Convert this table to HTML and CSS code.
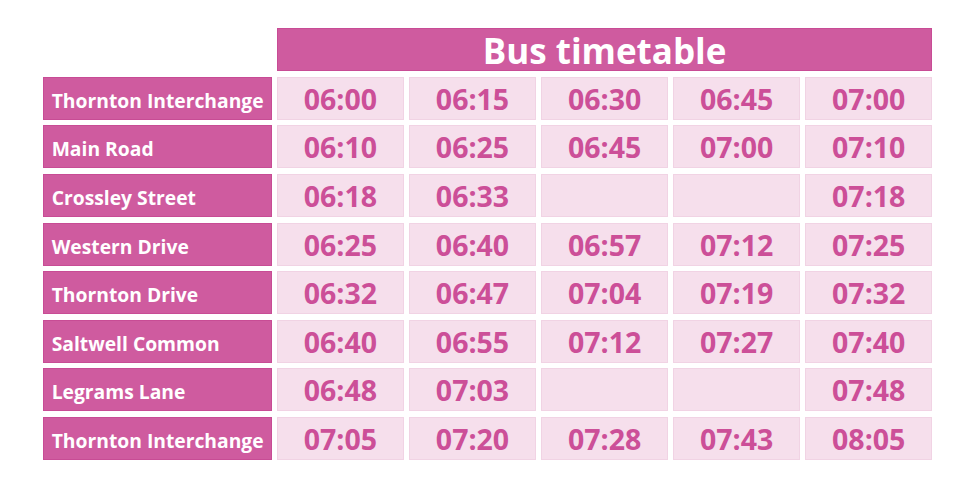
FILE: index.html
```html
<!DOCTYPE html>
<html lang="en">
<head>
<meta charset="utf-8">
<title>Bus timetable</title>
<link rel="stylesheet" href="styles.css">
</head>
<body>
<div class="timetable">
  <div class="spacer"></div>
  <div class="title">Bus timetable</div>

  <div class="stop">Thornton Interchange</div>
  <div class="time">06:00</div><div class="time">06:15</div><div class="time">06:30</div><div class="time">06:45</div><div class="time">07:00</div>

  <div class="stop">Main Road</div>
  <div class="time">06:10</div><div class="time">06:25</div><div class="time">06:45</div><div class="time">07:00</div><div class="time">07:10</div>

  <div class="stop">Crossley Street</div>
  <div class="time">06:18</div><div class="time">06:33</div><div class="time"></div><div class="time"></div><div class="time">07:18</div>

  <div class="stop">Western Drive</div>
  <div class="time">06:25</div><div class="time">06:40</div><div class="time">06:57</div><div class="time">07:12</div><div class="time">07:25</div>

  <div class="stop">Thornton Drive</div>
  <div class="time">06:32</div><div class="time">06:47</div><div class="time">07:04</div><div class="time">07:19</div><div class="time">07:32</div>

  <div class="stop">Saltwell Common</div>
  <div class="time">06:40</div><div class="time">06:55</div><div class="time">07:12</div><div class="time">07:27</div><div class="time">07:40</div>

  <div class="stop">Legrams Lane</div>
  <div class="time">06:48</div><div class="time">07:03</div><div class="time"></div><div class="time"></div><div class="time">07:48</div>

  <div class="stop">Thornton Interchange</div>
  <div class="time">07:05</div><div class="time">07:20</div><div class="time">07:28</div><div class="time">07:43</div><div class="time">08:05</div>
</div>
</body>
</html>
```

FILE: styles.css
```css
html, body {
  margin: 0;
  padding: 0;
  background: #ffffff;
}

body {
  font-family: "Open Sans", "Noto Sans", sans-serif;
  font-weight: 700;
}

.timetable {
  display: grid;
  grid-template-columns: 229px repeat(5, 126.7px);
  grid-auto-rows: 43px;
  column-gap: 5.4px;
  row-gap: 5.6px;
  padding: 28.3px 0 0 42.7px;
}

.spacer {
  grid-column: 1;
}

.title {
  grid-column: 2 / span 5;
  background: #cf5b9f;
  border: 1px solid #c84c95;
  box-sizing: border-box;
  color: #ffffff;
  font-size: 35px;
  display: flex;
  align-items: center;
  justify-content: center;
  line-height: 1;
  padding-top: 1px;
}

.stop {
  background: #cf5b9f;
  border: 1px solid #c84c95;
  box-sizing: border-box;
  color: #ffffff;
  font-size: 19.3px;
  display: flex;
  align-items: center;
  padding: 4px 0 0 8px;
  white-space: nowrap;
}

.time {
  background: #f6dfec;
  border: 1px solid #f1d3e4;
  box-sizing: border-box;
  color: #cc4f98;
  font-size: 28.5px;
  display: flex;
  align-items: center;
  justify-content: center;
  padding-top: 1px;
}
```
